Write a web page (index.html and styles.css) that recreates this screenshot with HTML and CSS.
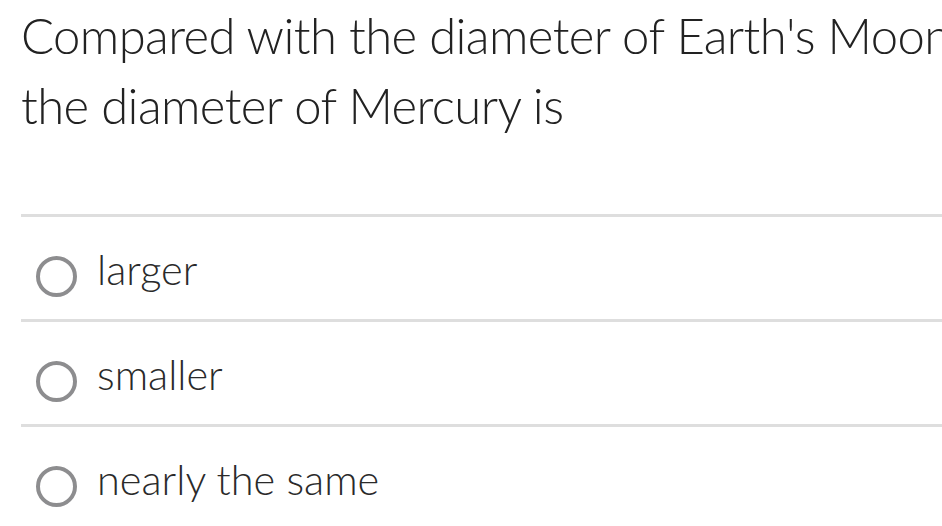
FILE: index.html
```html
<!DOCTYPE html>
<html lang="en">
<head>
<meta charset="utf-8">
<title>Question</title>
<link rel="stylesheet" href="styles.css">
</head>
<body>
<main class="quiz">
  <h1 class="question">Compared with the diameter of Earth's Moon,<br>the diameter of Mercury is</h1>
  <ul class="options">
    <li class="option"><span class="radio"></span><span class="label">larger</span></li>
    <li class="option"><span class="radio"></span><span class="label">smaller</span></li>
    <li class="option"><span class="radio"></span><span class="label">nearly the same</span></li>
  </ul>
</main>
</body>
</html>
```
FILE: styles.css
```css
html, body {
  margin: 0;
  padding: 0;
  overflow: hidden;
  background: #ffffff;
}
body {
  font-family: Lato, "Open Sans", "Liberation Sans", sans-serif;
  color: #262626;
}
.quiz {
  width: 1000px;
  padding-left: 21px;
}
.question {
  margin: 0 0 74px 0;
  font-size: 49px;
  line-height: 70px;
  font-weight: 300;
  letter-spacing: -0.6px;
  color: #222222;
}
.options {
  list-style: none;
  margin: 0;
  padding: 0;
}
.option {
  display: flex;
  align-items: flex-start;
  gap: 20px;
  border-top: 3px solid #dedede;
  padding: 28px 0 22px 15px;
}
.radio {
  box-sizing: border-box;
  width: 41px;
  height: 41px;
  margin-top: 11px;
  border: 4px solid #8d8d8f;
  border-radius: 50%;
  flex: none;
}
.label {
  font-size: 41.5px;
  line-height: 48px;
  font-weight: 300;
  color: #2a2a2a;
}
```
